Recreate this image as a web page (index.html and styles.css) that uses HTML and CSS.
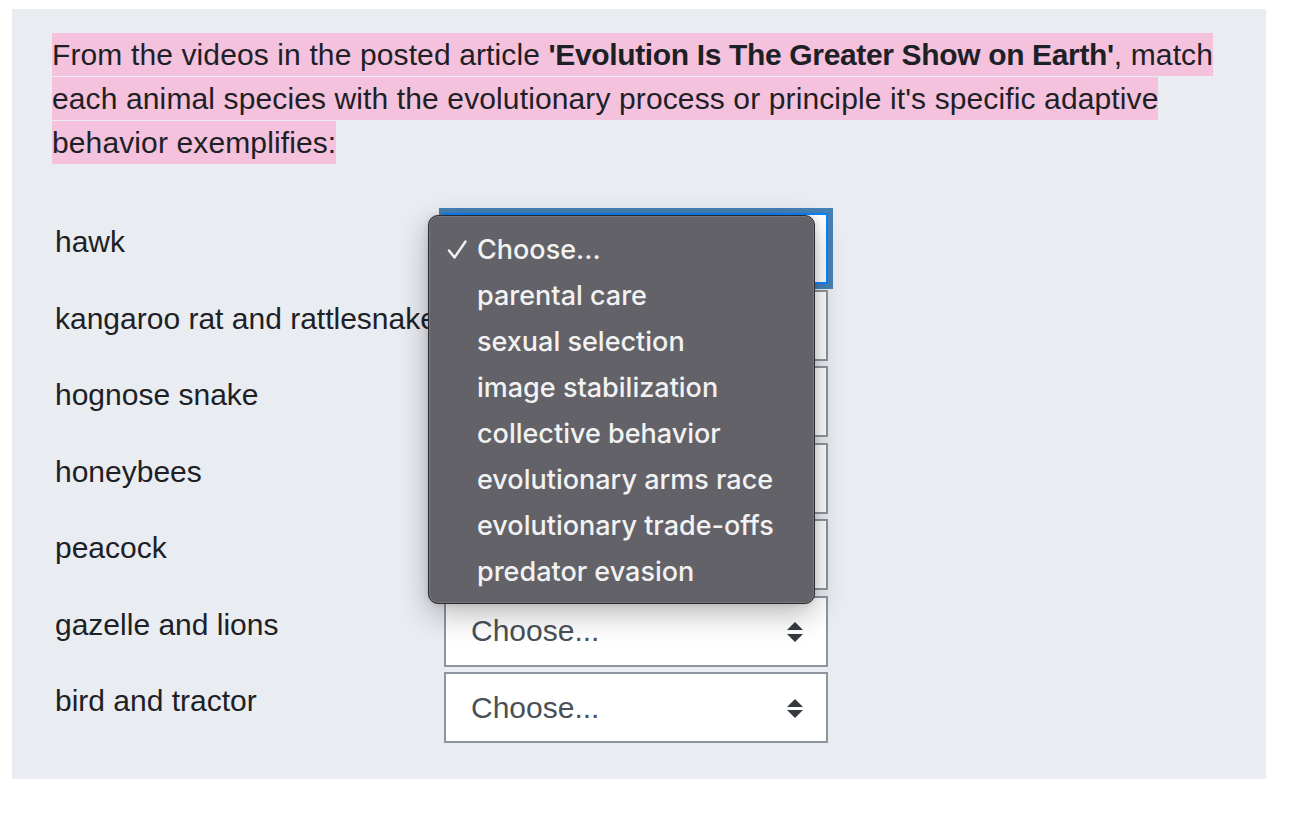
FILE: index.html
```html
<!DOCTYPE html>
<html lang="en">
<head>
<meta charset="utf-8">
<title>Matching question</title>
<link rel="stylesheet" href="styles.css">
</head>
<body>
<div class="panel">
  <p class="prompt"><span class="hl">From the videos in the posted article <strong>'Evolution Is The Greater Show on Earth'</strong>, match each animal species with the evolutionary process or principle it's specific adaptive behavior exemplifies:</span></p>
  <div class="rows">
    <div class="row">
      <div class="label">hawk</div>
      <div class="select focused">
        <span class="val">Choose...</span>
        <span class="arrows"><i class="up"></i><i class="down"></i></span>
        <div class="menu">
          <div class="item"><svg class="check" width="20" height="20" viewBox="0 0 20 20"><path d="M2 10.5 L7.5 17.5 L18.5 1.5" fill="none" stroke="#f2f2f3" stroke-width="2.4" stroke-linecap="round" stroke-linejoin="round"/></svg>Choose...</div>
          <div class="item">parental care</div>
          <div class="item">sexual selection</div>
          <div class="item">image stabilization</div>
          <div class="item">collective behavior</div>
          <div class="item">evolutionary arms race</div>
          <div class="item">evolutionary trade-offs</div>
          <div class="item">predator evasion</div>
        </div>
      </div>
    </div>
    <div class="row">
      <div class="label">kangaroo rat and rattlesnake</div>
      <div class="select"><span class="val">Choose...</span><span class="arrows"><i class="up"></i><i class="down"></i></span></div>
    </div>
    <div class="row">
      <div class="label">hognose snake</div>
      <div class="select"><span class="val">Choose...</span><span class="arrows"><i class="up"></i><i class="down"></i></span></div>
    </div>
    <div class="row">
      <div class="label">honeybees</div>
      <div class="select"><span class="val">Choose...</span><span class="arrows"><i class="up"></i><i class="down"></i></span></div>
    </div>
    <div class="row">
      <div class="label">peacock</div>
      <div class="select"><span class="val">Choose...</span><span class="arrows"><i class="up"></i><i class="down"></i></span></div>
    </div>
    <div class="row">
      <div class="label">gazelle and lions</div>
      <div class="select"><span class="val">Choose...</span><span class="arrows"><i class="up"></i><i class="down"></i></span></div>
    </div>
    <div class="row">
      <div class="label">bird and tractor</div>
      <div class="select"><span class="val">Choose...</span><span class="arrows"><i class="up"></i><i class="down"></i></span></div>
    </div>
  </div>
</div>
</body>
</html>
```

FILE: styles.css
```css
html, body {
  margin: 0;
  padding: 0;
  background: #ffffff;
}
body {
  padding: 9px 24px 0 12px;
  font-family: "Liberation Sans", Arial, sans-serif;
  color: #1d2125;
}
.panel {
  width: 1254px;
  box-sizing: border-box;
  background: #e9ecf1;
  padding: 24px 40px 36px 40px;
}
.prompt {
  margin: 0;
  font-size: 30px;
  line-height: 44px;
  max-width: 1174px;
  letter-spacing: 0.12px;
}
.hl {
  background: #f4c2dd;
  padding: 4.7px 0;
  box-decoration-break: clone;
  -webkit-box-decoration-break: clone;
}
.hl strong {
  font-weight: 700;
  letter-spacing: -0.35px;
}
.rows {
  margin-top: 48px;
  display: flex;
  flex-direction: column;
  gap: 5.5px;
}
.row {
  display: grid;
  grid-template-columns: 392px 384px;
  height: 71px;
}
.label {
  font-size: 30px;
  line-height: 44px;
  padding: 7px 0 0 3px;
  white-space: nowrap;
}
.select {
  position: relative;
  box-sizing: border-box;
  height: 71px;
  background: #ffffff;
  border: 2px solid #8f959e;
  display: flex;
  align-items: center;
  justify-content: space-between;
  padding: 0 23px 0 25px;
}
.select.focused {
  border-color: #0a84ff;
  box-shadow: 0 0 0 5px #4682b7;
}
.val {
  font-size: 30px;
  color: #495057;
}
.arrows {
  display: flex;
  flex-direction: column;
  gap: 3.5px;
  margin-top: 2px;
}
.arrows i {
  display: block;
  width: 0;
  height: 0;
  border-left: 8px solid transparent;
  border-right: 8px solid transparent;
}
.arrows .up {
  border-bottom: 8px solid #343a40;
}
.arrows .down {
  border-top: 8px solid #343a40;
}
.menu {
  position: absolute;
  left: -18px;
  top: 0px;
  width: 387px;
  height: 389px;
  box-sizing: border-box;
  background: #636268;
  border: 1px solid #2c2c30;
  border-radius: 10px;
  box-shadow: inset 0 0 0 1px #77767c, 0 10px 30px rgba(0, 0, 0, 0.28), 0 0 6px rgba(0, 0, 0, 0.12);
  padding: 11px 0 8px 0;
  font-family: Inter, "Noto Sans", sans-serif;
  color: #f2f2f3;
  z-index: 10;
}
.item {
  position: relative;
  height: 46px;
  line-height: 46px;
  font-size: 27px;
  font-weight: 500;
  padding-left: 48px;
  white-space: nowrap;
}
.check {
  position: absolute;
  left: 18px;
  top: 13px;
}
```
